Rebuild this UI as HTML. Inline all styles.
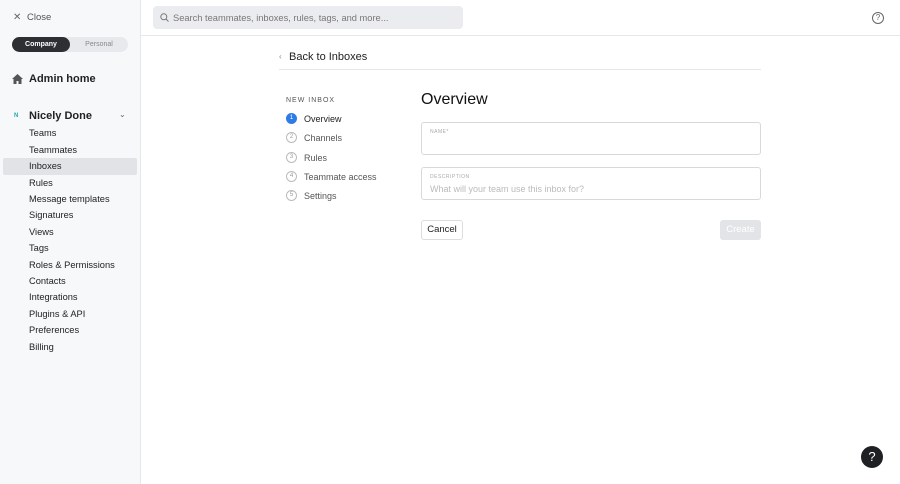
<!DOCTYPE html>
<html><head><style>
*{box-sizing:border-box;margin:0;padding:0}
body{width:900px;height:484px;font-family:"Liberation Sans",sans-serif;background:#fff;position:relative;overflow:hidden;color:#222}
.side{position:absolute;left:0;top:0;width:141px;height:484px;background:#f7f8fa;border-right:1px solid #e6e7ea}
.abs{position:absolute}
.nav div{position:absolute;left:29px;font-size:9.3px;color:#222}
.top{position:absolute;left:141px;top:0;right:0;height:36px;border-bottom:1px solid #e6e7ea}
.step{position:absolute;left:286px;font-size:9px;color:#555}
.step i{position:absolute;left:0;top:-1px;width:11px;height:11px;border:1px solid #bbb;border-radius:50%;font-style:normal;font-size:6px;text-align:center;line-height:9px;color:#999}
.step span{position:absolute;left:18px;white-space:nowrap}
.field{position:absolute;left:421px;width:340px;height:33px;border:1px solid #d8d9dc;border-radius:3px}
</style></head><body>
<div class="side">
 <div class="abs" style="left:13px;top:12px;font-size:10px;color:#666">✕</div>
 <div class="abs" style="left:27px;top:12px;font-size:9.5px;color:#555">Close</div>
 <div class="abs" style="left:12px;top:37px;width:116px;height:15px;background:#e8e9ec;border-radius:8px"></div>
 <div class="abs" style="left:12px;top:37px;width:58px;height:15px;background:#2e2f33;border-radius:8px;color:#fff;font-size:7px;font-weight:bold;text-align:center;line-height:15px">Company</div>
 <div class="abs" style="left:70px;top:37px;width:58px;height:15px;color:#888;font-size:7px;text-align:center;line-height:15px">Personal</div>
 <svg class="abs" style="left:12px;top:74px" width="11" height="10" viewBox="0 0 11 10"><path d="M5.5 0L0 5h1.5v5h3V7h2v3h3V5H11z" fill="#555"/></svg>
 <div class="abs" style="left:29px;top:73px;font-size:11px;font-weight:bold">Admin home</div>
 <div class="abs" style="left:14px;top:113px;font-size:6px;color:#2aa;font-weight:bold">N</div>
 <div class="abs" style="left:29px;top:110px;font-size:11px;font-weight:bold">Nicely Done</div>
 <div class="abs" style="left:119px;top:110px;font-size:8px;color:#666">⌄</div>
 <div class="abs" style="left:3px;top:158px;width:134px;height:17px;background:#e1e3e7;border-radius:2px"></div>
 <div class="nav">
  <div style="top:128px">Teams</div><div style="top:145px">Teammates</div><div style="top:161px">Inboxes</div><div style="top:178px">Rules</div><div style="top:194px">Message templates</div><div style="top:210px">Signatures</div><div style="top:227px">Views</div><div style="top:243px">Tags</div><div style="top:260px">Roles &amp; Permissions</div><div style="top:276px">Contacts</div><div style="top:292px">Integrations</div><div style="top:309px">Plugins &amp; API</div><div style="top:325px">Preferences</div><div style="top:342px">Billing</div>
 </div>
</div>
<div class="top">
 <div class="abs" style="left:12px;top:6px;width:310px;height:23px;background:#ebecef;border-radius:4px"></div>
 <svg class="abs" style="left:19px;top:13px" width="9" height="9"><circle cx="3.8" cy="3.8" r="3" fill="none" stroke="#777" stroke-width="1"/><path d="M6 6l2.5 2.5" stroke="#777"/></svg>
 <div class="abs" style="left:32px;top:13px;font-size:9.3px;color:#777">Search teammates, inboxes, rules, tags, and more...</div>
 <div class="abs" style="left:731px;top:12px;width:12px;height:12px;border:1.3px solid #666;border-radius:50%;font-size:8px;text-align:center;line-height:10px;color:#666">?</div>
</div>
<div class="abs" style="left:279px;top:52px;font-size:8px;color:#888">‹</div>
<div class="abs" style="left:289px;top:51px;font-size:11px;color:#222">Back to Inboxes</div>
<div class="abs" style="left:279px;top:69px;width:482px;height:1px;background:#e6e7ea"></div>
<div class="abs" style="left:286px;top:97px;font-size:7px;letter-spacing:1px;color:#555">NEW INBOX</div>
<div class="step" style="top:114px"><i style="background:#2f7be6;border-color:#2f7be6;color:#fff">1</i><span style="color:#222">Overview</span></div>
<div class="step" style="top:133px"><i>2</i><span>Channels</span></div>
<div class="step" style="top:153px"><i>3</i><span>Rules</span></div>
<div class="step" style="top:172px"><i>4</i><span>Teammate access</span></div>
<div class="step" style="top:191px"><i>5</i><span>Settings</span></div>
<div class="abs" style="left:421px;top:91px;font-size:16px;color:#111">Overview</div>
<div class="field" style="top:122px"><div class="abs" style="left:8px;top:6px;font-size:5px;letter-spacing:.5px;color:#aaa">NAME*</div></div>
<div class="field" style="top:167px"><div class="abs" style="left:8px;top:6px;font-size:5px;letter-spacing:.5px;color:#aaa">DESCRIPTION</div><div class="abs" style="left:8px;top:16px;font-size:9px;color:#bbb">What will your team use this inbox for?</div></div>
<div class="abs" style="left:421px;top:220px;width:42px;height:20px;border:1px solid #ddd;border-radius:3px;font-size:9.5px;text-align:center;line-height:18px;color:#222">Cancel</div>
<div class="abs" style="left:720px;top:220px;width:41px;height:20px;background:#e3e4e7;border-radius:3px;font-size:9.5px;text-align:center;line-height:20px;color:#fff">Create</div>
<div class="abs" style="left:861px;top:446px;width:22px;height:22px;background:#1f2023;border-radius:50%;color:#fff;font-size:13px;text-align:center;line-height:22px">?</div>
</body></html>
